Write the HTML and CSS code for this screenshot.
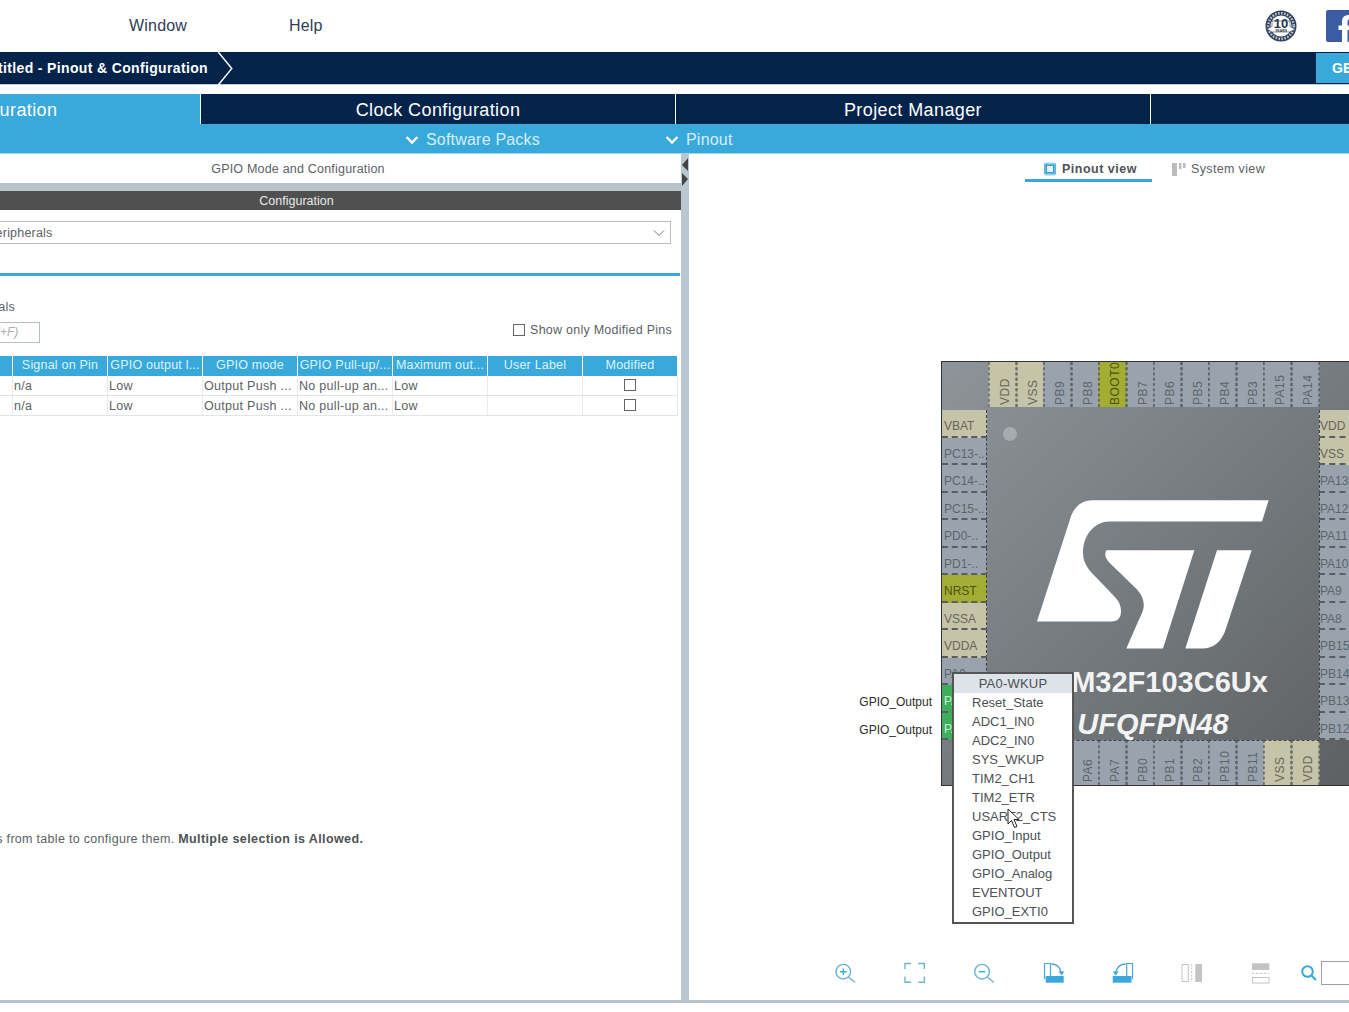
FILE: index.html
```html
<!DOCTYPE html>
<html lang="en">
<head>
<meta charset="utf-8">
<title>STM32CubeMX Untitled - Pinout &amp; Configuration</title>
<link rel="stylesheet" href="styles.css">
</head>
<body>
<div class="top">
  <header class="menubar">
    <span class="menu-item">File</span>
    <span class="menu-item">Window</span>
    <span class="menu-item">Help</span>
    <div class="socials">
      <svg class="badge" viewBox="0 0 32 32" aria-hidden="true">
        <circle cx="16" cy="16" r="15.5" fill="#33445e"/>
        <circle cx="16" cy="16" r="12.8" fill="none" stroke="#c6ccd4" stroke-width="2.400" stroke-dasharray="1.500 1.500"/>
        <circle cx="16" cy="16" r="10.5" fill="#fff"/>
        <path d="M2 19 L7 16.500 V11 H25 V16.500 L30 19 L25 22 H7 Z" fill="#fff" stroke="#33445e" stroke-width="0.600"/>
        <text x="16" y="18" text-anchor="middle" class="badge-num">10</text>
        <text x="16" y="21.500" text-anchor="middle" class="badge-years">YEARS</text>
      </svg>
      <svg class="fb" viewBox="0 0 40 32" aria-hidden="true">
        <rect width="40" height="32" rx="2" fill="#3b5ba5"/>
        <path d="M16 32 V20 H12.500 V15.500 H16 V11.500 C16 7 19 5 23 5 H27 V9.500 H24 C22 9.500 21.500 10.500 21.500 12 V15.500 H27 L26 20 H21.500 V32 Z" fill="#fff"/>
      </svg>
    </div>
  </header>
  <nav class="crumbbar">
    <span class="crumb">Untitled - Pinout &amp; Configuration</span>
    <svg class="crumb-arrow" viewBox="0 0 18 34" aria-hidden="true"><path d="M1 0 L15 17 L1 34" fill="none" stroke="#fff" stroke-width="1.500"/></svg>
    <span class="generate">GENERATE CODE</span>
  </nav>
  <div class="tabs">
    <div class="tab tab-active">Pinout &amp; Configuration</div>
    <div class="tab">Clock Configuration</div>
    <div class="tab">Project Manager</div>
    <div class="tab tab-last">Tools</div>
  </div>
  <div class="subbar">
    <span class="sub-item sub-packs">
      <svg class="sub-chev" viewBox="0 0 14 10" aria-hidden="true"><path d="M1.500 2 L7 7.500 L12.500 2" fill="none" stroke="#fff" stroke-width="2.400"/></svg>
      Software Packs
    </span>
    <span class="sub-item">
      <svg class="sub-chev" viewBox="0 0 14 10" aria-hidden="true"><path d="M1.500 2 L7 7.500 L12.500 2" fill="none" stroke="#fff" stroke-width="2.400"/></svg>
      Pinout
    </span>
  </div>
</div>

<main class="main">
  <section class="left">
    <div class="left-title">GPIO Mode and Configuration</div>
    <div class="config-bar">Configuration</div>
    <div class="select">
      <span>Group By Peripherals</span>
      <svg class="select-chev" viewBox="0 0 12 8" aria-hidden="true"><path d="M1 1.500 L6 6.500 L11 1.500" fill="none" stroke="#777" stroke-width="1"/></svg>
    </div>
    <div class="blue-rule"></div>
    <div class="search-label">Search Signals</div>
    <div class="search-row">
      <div class="search-box">Search (Crtl+F)</div>
      <label class="modified-check"><span class="box"></span>Show only Modified Pins</label>
    </div>
    <div class="table">
      <div class="tr th">
        <div>Pin Name</div><div>Signal on Pin</div><div>GPIO output l...</div><div>GPIO mode</div><div>GPIO Pull-up/...</div><div>Maximum out...</div><div>User Label</div><div>Modified</div>
      </div>
      <div class="tr">
        <div>PA1</div><div>n/a</div><div>Low</div><div>Output Push ...</div><div>No pull-up an...</div><div>Low</div><div></div><div class="cell-check"><span class="box"></span></div>
      </div>
      <div class="tr">
        <div>PA2</div><div>n/a</div><div>Low</div><div>Output Push ...</div><div>No pull-up an...</div><div>Low</div><div></div><div class="cell-check"><span class="box"></span></div>
      </div>
    </div>
    <p class="hint">Select Pins from table to configure them. <b>Multiple selection is Allowed.</b></p>
  </section>

  <div class="divider">
    <svg class="collapse" viewBox="0 0 8 30" aria-hidden="true"><path d="M7 2 L1 9 L7 15 Z M1 17 L7 23 L1 30 Z" fill="#444"/></svg>
  </div>

  <section class="right">
    <div class="view-tabs">
      <div class="view-tab view-on">
        <svg class="view-icon" viewBox="0 0 14 14" aria-hidden="true"><path d="M3 0v14M5 0v14M7 0v14M9 0v14M11 0v14" stroke="#7cc6e6" stroke-width="0.800"/><rect x="1" y="1.500" width="12" height="11" fill="#5fb8de"/><rect x="3.500" y="3.500" width="7" height="7" fill="#dff1f9" stroke="#2f8fbd" stroke-width="0.800"/></svg>
        Pinout view
      </div>
      <div class="view-tab">
        <svg class="view-icon" viewBox="0 0 14 14" aria-hidden="true"><path d="M0 1h5v13H0zM7 1h2.500v6H7zM11 1h2.500v5H11z" fill="#bbb"/></svg>
        System view
      </div>
    </div>

    <div class="chip">
      <div class="corner c1"></div>
      <div class="pins pins-top">
        <span class="pin tan">VDD</span><span class="pin tan">VSS</span><span class="pin">PB9</span><span class="pin">PB8</span><span class="pin olive">BOOT0</span><span class="pin">PB7</span><span class="pin">PB6</span><span class="pin">PB5</span><span class="pin">PB4</span><span class="pin">PB3</span><span class="pin">PA15</span><span class="pin">PA14</span>
      </div>
      <div class="corner c2"></div>
      <div class="pins-side pins-left">
        <span class="spin tan">VBAT</span><span class="spin">PC13-..</span><span class="spin">PC14-..</span><span class="spin">PC15-..</span><span class="spin">PD0-..</span><span class="spin">PD1-..</span><span class="spin olive">NRST</span><span class="spin tan">VSSA</span><span class="spin tan">VDDA</span><span class="spin">PA0-..</span><span class="spin green">PA1</span><span class="spin green">PA2</span>
      </div>
      <div class="core">
        <span class="dot"></span>
        <svg class="st-logo" viewBox="320 58 696 446" aria-label="ST logo">
          <path fill="#fff" d="M320 422 L420 112 C430 80 452 58 485 58 L1015 58 L995 122 L535 122 C490 124 458 165 458 215 C458 250 478 270 500 292 L555 350 C566 362 572 374 572 392 C572 410 562 422 545 422 Z"/>
          <path fill="#fff" d="M528 208 L792 208 L698 503 L588 503 L622 425 C634 400 642 385 640 368 C638 345 625 330 610 316 L540 248 C528 236 520 222 528 208 Z"/>
          <path fill="#fff" d="M860 208 L964 208 L888 440 C874 485 850 503 815 503 L765 503 Z"/>
        </svg>
        <div class="chip-name">STM32F103C6Ux</div>
        <div class="chip-pack">UFQFPN48</div>
      </div>
      <div class="pins-side pins-right">
        <span class="spin tan">VDD</span><span class="spin tan">VSS</span><span class="spin">PA13</span><span class="spin">PA12</span><span class="spin">PA11</span><span class="spin">PA10</span><span class="spin">PA9</span><span class="spin">PA8</span><span class="spin">PB15</span><span class="spin">PB14</span><span class="spin">PB13</span><span class="spin">PB12</span>
      </div>
      <div class="corner c3"></div>
      <div class="pins pins-bottom">
        <span class="pin">PA3</span><span class="pin">PA4</span><span class="pin">PA5</span><span class="pin">PA6</span><span class="pin">PA7</span><span class="pin">PB0</span><span class="pin">PB1</span><span class="pin">PB2</span><span class="pin">PB10</span><span class="pin">PB11</span><span class="pin tan">VSS</span><span class="pin tan">VDD</span>
      </div>
      <div class="corner c4"></div>

      <span class="signal s1">GPIO_Output</span>
      <span class="signal s2">GPIO_Output</span>

      <div class="pin-menu">
        <div class="pin-menu-head">PA0-WKUP</div>
        <div>Reset_State</div>
        <div>ADC1_IN0</div>
        <div>ADC2_IN0</div>
        <div>SYS_WKUP</div>
        <div>TIM2_CH1</div>
        <div>TIM2_ETR</div>
        <div>USART2_CTS</div>
        <div>GPIO_Input</div>
        <div>GPIO_Output</div>
        <div>GPIO_Analog</div>
        <div>EVENTOUT</div>
        <div>GPIO_EXTI0</div>
        <svg class="cursor" viewBox="0 0 14 21" aria-hidden="true"><path d="M1 1 L1 16 L4.500 12.500 L7.500 19.500 L10 18.500 L7 11.500 L12 11.500 Z" fill="#fff" stroke="#222" stroke-width="1"/></svg>
      </div>
    </div>

    <div class="toolbar">
      <svg class="tool" viewBox="0 0 24 24" aria-hidden="true"><g fill="none" stroke="#6eb4d2" stroke-width="1.400"><circle cx="9.300" cy="10.700" r="7.300"/><path d="M14.500 16 L21 21.300"/></g><path d="M6 10.700 H12.600 M9.300 7.400 V14" stroke="#39a9dc" stroke-width="1.400"/></svg>
      <svg class="tool" viewBox="-1 0 24 24" aria-hidden="true"><path d="M1 8 V2.500 H7 M14.300 2.500 H20.300 V8 M20.300 15.500 V21.300 H14.300 M7 21.300 H1 V15.500" fill="none" stroke="#6eb4d2" stroke-width="1.400"/></svg>
      <svg class="tool" viewBox="-2 0 24 24" aria-hidden="true"><g fill="none" stroke="#6eb4d2" stroke-width="1.400"><circle cx="8" cy="10.700" r="7.300"/><path d="M13.200 16 L19.700 21.300"/></g><path d="M4.700 10.700 H11.300" stroke="#39a9dc" stroke-width="1.400"/></svg>
      <svg class="tool" viewBox="-3 0 24 24" aria-hidden="true"><path d="M0.500 18 V2.500 H6.500 V16" fill="none" stroke="#4aa7d3" stroke-width="1.200"/><rect x="1.700" y="15" width="18" height="6.700" fill="#39a9dc"/><path d="M7.300 3 C12 3 16 6 17.300 11.500" fill="none" stroke="#4aa7d3" stroke-width="1.300"/><path d="M14.500 10.500 H20.500 L17.500 14.500 Z" fill="#39a9dc"/></svg>
      <svg class="tool" viewBox="-4 0 24 24" aria-hidden="true"><path d="M18.500 18 V2.500 H12.700 V16" fill="none" stroke="#4aa7d3" stroke-width="1.200"/><rect x="-1.300" y="15" width="18.800" height="6.700" fill="#39a9dc"/><path d="M11.700 3 C7 3 3 6 1.700 11.500" fill="none" stroke="#4aa7d3" stroke-width="1.300"/><path d="M-1.300 10.500 H4.700 L1.700 14.500 Z" fill="#39a9dc"/></svg>
      <svg class="tool" viewBox="-5 0 24 24" aria-hidden="true"><rect x="-2" y="3.500" width="6.300" height="17" fill="#fff" stroke="#c4c4c4"/><path d="M7.700 3 V21" stroke="#c4c4c4" stroke-dasharray="2 1.500"/><rect x="11.300" y="3" width="6.700" height="18" fill="#c4c4c4"/></svg>
      <svg class="tool" viewBox="-6 0 24 24" aria-hidden="true"><rect x="-2" y="2.300" width="17.300" height="6.700" fill="#c4c4c4"/><path d="M-2 12.300 H15.300" stroke="#c4c4c4" stroke-dasharray="2.500 1.500"/><rect x="-1.500" y="16.500" width="16.500" height="5.500" fill="#fff" stroke="#c4c4c4"/></svg>
      <svg class="tool-search" viewBox="0 0 16 16" aria-hidden="true"><circle cx="6.500" cy="6.500" r="5.300" fill="none" stroke="#39a9dc" stroke-width="2"/><path d="M10.500 10.500 L15 15" stroke="#39a9dc" stroke-width="2"/></svg>
      <div class="zoom-input"></div>
    </div>
  </section>
</main>
<div class="foot-rule"></div>
</body>
</html>
```
FILE: styles.css
```css
* { box-sizing: border-box; }
html, body { margin: 0; height: 1012px; overflow: hidden; background: #fff; }
body { font-family: "Liberation Sans", Arial, sans-serif; color: #5c6166; width: 1349px; }

.top { width: 1800px; margin-left: -275px; }

.menubar { height: 52px; display: flex; align-items: center; padding-left: 244px; padding-right: 159px; }
.menu-item { width: 160px; font-size: 16px; letter-spacing: 0.2px; color: #2f3d55; }
.socials { margin-left: auto; display: flex; align-items: center; gap: 29px; }
.badge { width: 32px; height: 32px; display: block; }
.badge-num { font: bold 13px "Liberation Sans", sans-serif; fill: #27364d; }
.badge-years { font: bold 3.500px "Liberation Sans", sans-serif; fill: #27364d; }
.fb { width: 40px; height: 32px; display: block; }

.crumbbar { height: 33px; background: #03234b; border-bottom: 1px solid #c2cdd6; display: flex; align-items: center; }
.crumb { width: 483px; text-align: right; color: #fff; font-size: 14px; font-weight: bold; letter-spacing: 0.35px; }
.crumb-arrow { width: 18px; height: 33px; margin-left: 9px; flex: none; }
.generate { margin-left: auto; width: 209px; height: 30px; margin-top: -1px; padding-left: 16px; line-height: 30px; background: #39a9dc; color: #fff; font-size: 14px; font-weight: bold; }

.tabs { display: flex; margin-top: 9px; margin-left: 1px; height: 30px; }
.tab { width: 475px; background: #03234b; color: #fff; font-size: 18px; letter-spacing: 0.4px; line-height: 32px; text-align: center; border-right: 1px solid #fff; flex: none; }
.tab-active { background: #39a9dc; }
.tab-last { width: 375px; border-right: 0; color: #03234b; }

.subbar { height: 30px; background: #39a9dc; border-bottom: 1px solid #9fd3ec; display: flex; padding: 2px 0 0 680px; align-items: center; }
.sub-item { display: flex; align-items: center; gap: 7px; color: #d6effa; font-size: 16px; letter-spacing: 0.2px; }
.sub-packs { width: 260px; }
.sub-chev { width: 14px; height: 10px; flex: none; }

.main { display: flex; margin-left: -87px; width: 1436px; height: 846px; }

.left { width: 768px; flex: none; display: flex; flex-direction: column; }
.left-title { height: 29px; line-height: 31px; text-align: center; font-size: 12.500px; letter-spacing: 0.2px; padding-left: 2px; }
.config-bar { margin-top: 8px; height: 19px; line-height: 21px; background: #505050; color: #e8e8e8; text-align: center; font-size: 12.500px; padding-right: 1px; box-shadow: 0 -8px 0 #b9c4ca; }
.select { margin: 11px 10px 0 8px; height: 23px; border: 1px solid #b5bcc2; display: flex; align-items: center; justify-content: space-between; padding: 0 5px 0 7px; font-size: 12.500px; letter-spacing: 0.2px; }
.select-chev { width: 12px; height: 8px; }
.blue-rule { margin: 29px 1px 0 0; height: 3px; background: #39a9dc; }
.search-label { margin: 22px 0 0 15px; height: 16px; line-height: 18px; font-size: 12.500px; letter-spacing: 0.2px; }
.search-row { margin: 8px 9px 0 20px; display: flex; align-items: center; justify-content: space-between; height: 21px; }
.search-box { width: 107px; height: 21px; border: 1px solid #b5bcc2; font-size: 12px; font-style: italic; color: #a9aeb2; line-height: 19px; padding-left: 2px; white-space: nowrap; overflow: hidden; }
.modified-check { display: flex; align-items: center; gap: 5px; font-size: 12.500px; letter-spacing: 0.25px; margin-top: -6px; }
.box { display: block; width: 12px; height: 12px; border: 1px solid #666; background: #fff; flex: none; }

.table { margin: 13px 3px 0 5px; }
.tr { display: grid; grid-template-columns: repeat(8, 95px); height: 20px; border-bottom: 1px solid #e2e5e8; font-size: 12.500px; letter-spacing: 0.3px; line-height: 20px; }
.tr > div { padding-left: 1px; border-right: 1px solid #e8eaec; white-space: nowrap; overflow: hidden; }
.th { height: 20px; border-bottom: 0; letter-spacing: 0.2px; line-height: 19px; background: #fff; }
.th > div { background: #39a9dc; color: #dff3fc; text-align: center; padding: 0; border-right: 1px solid #fff; }
.tr > .cell-check { display: flex; align-items: center; justify-content: center; padding: 0 1px 2px 0; }

.hint { margin: 415px 0 0 24px; font-size: 12.500px; letter-spacing: 0.3px; line-height: 16px; white-space: nowrap; }
.hint b { color: #4e5256; letter-spacing: 0.4px; }

.divider { width: 8px; flex: none; background: #b9c7d0; position: relative; }
.collapse { position: absolute; left: 0; top: 2px; width: 8px; height: 30px; }

.right { width: 660px; flex: none; display: flex; flex-direction: column; }
.view-tabs { display: flex; margin-left: 336px; height: 28px; }
.view-tab { display: flex; align-items: center; gap: 5px; font-size: 12.500px; letter-spacing: 0.35px; height: 28px; padding: 2px 0 0 20px; }
.view-on { width: 127px; padding: 4px 0 0 18px; font-weight: bold; letter-spacing: 0.5px; color: #4e5256; border-bottom: 3px solid #39a9dc; }
.view-icon { width: 14px; height: 14px; flex: none; }

.chip {
  margin: 179px 0 0 252px; width: 425px; height: 425px; position: relative; flex: none;
  display: grid; grid-template-columns: 45px 332px 47px; grid-template-rows: 45px 333px 45px;
  background: linear-gradient(135deg, #8e959a 0%, #747a7e 50%, #5d5f60 100%);
  border: 1px solid #333; border-right: 0;
}
.pins { display: flex; padding-left: 2px; }
.pin {
  width: 27.500px; flex: none; writing-mode: vertical-rl; transform: rotate(180deg);
  background: #9aa3ad; color: #5d646b; font-size: 12px; letter-spacing: 0.5px; line-height: 22px; padding: 2px 4px 0 0;
  border-left: 1px dashed #3f4347; border-right: 1px dashed #3f4347;
}
.pins-bottom .pin { padding-top: 3px; border-bottom: 1px dashed #3f4347; }
.tan { background: #c5c3a8; color: #66665a; }
.olive { background: #a3ad34; color: #4c5310; }
.pins-side { display: flex; flex-direction: column; padding-top: 3px; }
.spin {
  height: 27.500px; flex: none; background: #9aa3ad; color: #5d646b; font-size: 12px;
  line-height: 16px; padding: 8px 0 0 2px; border-bottom: 2px dashed #5a5e62; white-space: nowrap; overflow: hidden;
}
.spin.tan { background: #c5c3a8; color: #66665a; }
.spin.olive { background: #a3ad34; color: #4c5310; }
.spin.green { background: #3fae5c; color: #c8eecf; }
.pins-left .spin { border-right: 1px dashed #3f4347; }
.pins-right .spin { border-left: 1px dashed #3f4347; padding-left: 0; }

.core { display: flex; flex-direction: column; align-items: center; padding-top: 93px; position: relative; }
.dot { position: absolute; left: 16px; top: 20px; width: 14px; height: 14px; border-radius: 50%; background: #a5abb0; }
.st-logo { width: 232px; height: 149px; display: block; flex: none; }
.chip-name { margin: 17px 0 0 -4px; height: 32px; line-height: 32px; font-size: 29px; font-weight: bold; color: #f2f3f4; }
.chip-pack { margin-top: 10px; height: 32px; line-height: 32px; font-size: 29px; font-weight: bold; font-style: italic; color: #f2f3f4; }

.signal { position: absolute; right: 100%; margin-right: 10px; font-size: 12px; color: #2c2c2c; white-space: nowrap; line-height: 14px; }
.s1 { top: 333px; }
.s2 { top: 361px; }

.pin-menu { position: absolute; left: 10px; top: 310px; width: 122px; height: 252px; background: #fff; border: 2px solid #555; font-size: 13px; line-height: 19px; color: #4c5054; padding-left: 18px; }
.pin-menu > div { height: 19px; white-space: nowrap; }
.pin-menu .pin-menu-head { margin-left: -18px; background: #dde3e8; text-align: center; letter-spacing: 0.2px; }
.cursor { position: absolute; left: 53px; top: 134px; width: 14px; height: 21px; }

.toolbar { margin-top: auto; padding: 0 0 15px 145px; display: flex; align-items: center; height: 39px; }
.tool { width: 24px; height: 24px; flex: none; overflow: visible; margin-right: 45px; }
.tool:nth-of-type(7) { margin-right: 29px; }
.tool-search { width: 16px; height: 16px; flex: none; margin-right: 4px; }
.zoom-input { width: 60px; height: 24px; border: 1px solid #9aa0a5; flex: none; }

.foot-rule { height: 3px; background: #b9c4cf; }
```
